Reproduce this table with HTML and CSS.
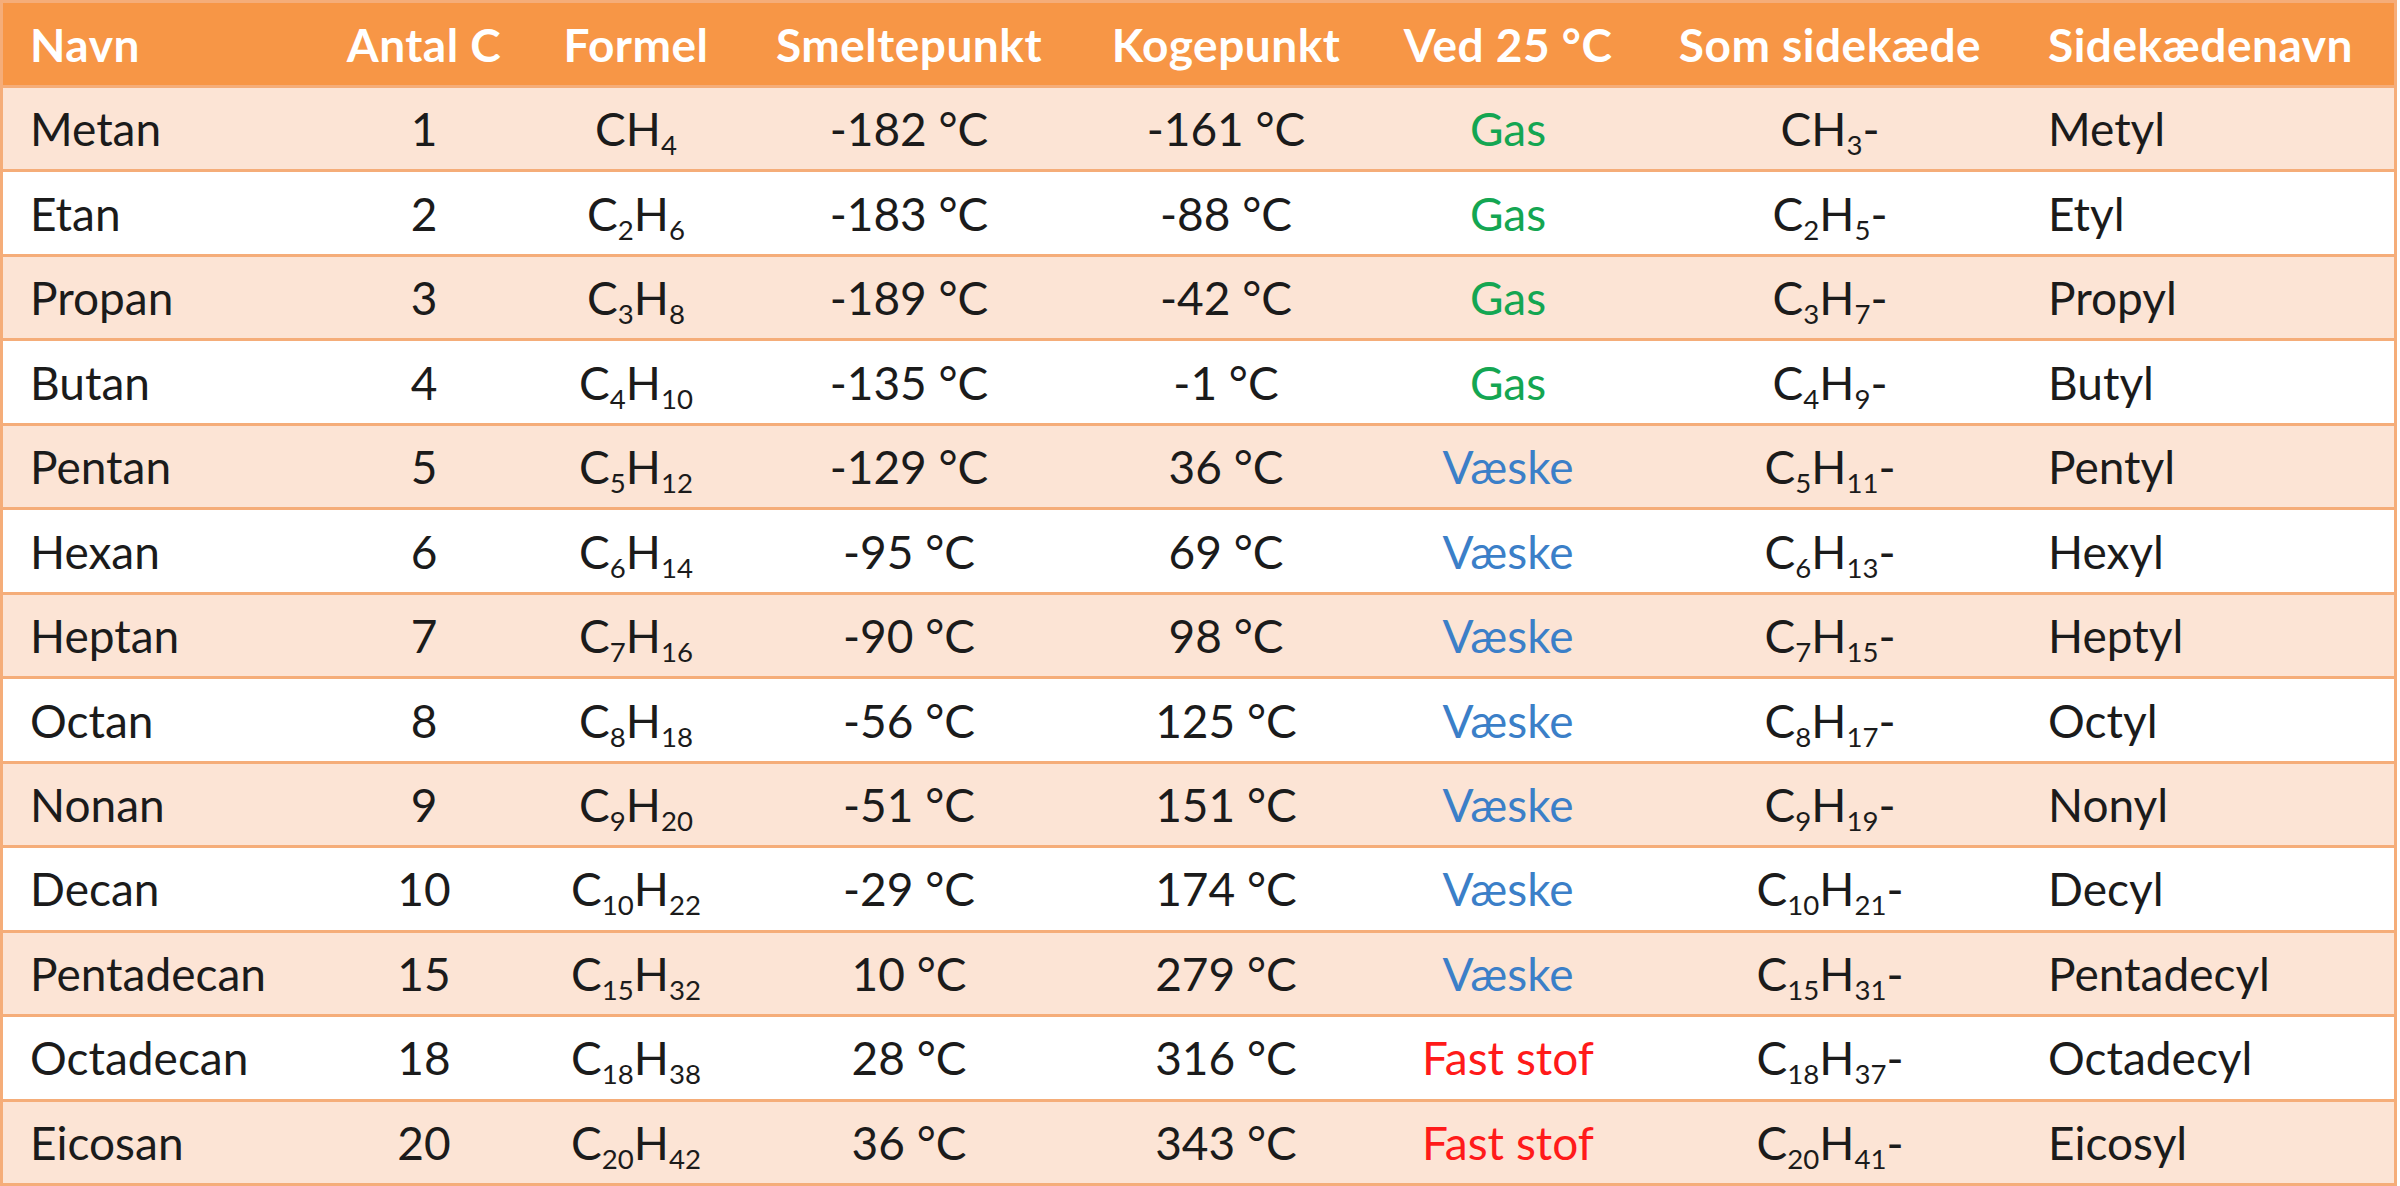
FILE: index.html
```html
<!DOCTYPE html>
<html lang="da">
<head>
<meta charset="utf-8">
<title>Alkaner</title>
<link rel="stylesheet" href="styles.css">
</head>
<body>
<div class="table">
  <div class="row head">
    <div class="c1">Navn</div><div class="c">Antal C</div><div class="c">Formel</div><div class="c">Smeltepunkt</div><div class="c">Kogepunkt</div><div class="c">Ved 25 °C</div><div class="c">Som sidekæde</div><div class="c8">Sidekædenavn</div>
  </div>
  <div class="row odd">
    <div class="c1">Metan</div><div class="c">1</div><div class="c">CH<sub>4</sub></div><div class="c">-182 °C</div><div class="c">-161 °C</div><div class="c gas">Gas</div><div class="c">CH<sub>3</sub>-</div><div class="c8">Metyl</div>
  </div>
  <div class="row even">
    <div class="c1">Etan</div><div class="c">2</div><div class="c">C<sub>2</sub>H<sub>6</sub></div><div class="c">-183 °C</div><div class="c">-88 °C</div><div class="c gas">Gas</div><div class="c">C<sub>2</sub>H<sub>5</sub>-</div><div class="c8">Etyl</div>
  </div>
  <div class="row odd">
    <div class="c1">Propan</div><div class="c">3</div><div class="c">C<sub>3</sub>H<sub>8</sub></div><div class="c">-189 °C</div><div class="c">-42 °C</div><div class="c gas">Gas</div><div class="c">C<sub>3</sub>H<sub>7</sub>-</div><div class="c8">Propyl</div>
  </div>
  <div class="row even">
    <div class="c1">Butan</div><div class="c">4</div><div class="c">C<sub>4</sub>H<sub>10</sub></div><div class="c">-135 °C</div><div class="c">-1 °C</div><div class="c gas">Gas</div><div class="c">C<sub>4</sub>H<sub>9</sub>-</div><div class="c8">Butyl</div>
  </div>
  <div class="row odd">
    <div class="c1">Pentan</div><div class="c">5</div><div class="c">C<sub>5</sub>H<sub>12</sub></div><div class="c">-129 °C</div><div class="c">36 °C</div><div class="c liquid">Væske</div><div class="c">C<sub>5</sub>H<sub>11</sub>-</div><div class="c8">Pentyl</div>
  </div>
  <div class="row even">
    <div class="c1">Hexan</div><div class="c">6</div><div class="c">C<sub>6</sub>H<sub>14</sub></div><div class="c">-95 °C</div><div class="c">69 °C</div><div class="c liquid">Væske</div><div class="c">C<sub>6</sub>H<sub>13</sub>-</div><div class="c8">Hexyl</div>
  </div>
  <div class="row odd">
    <div class="c1">Heptan</div><div class="c">7</div><div class="c">C<sub>7</sub>H<sub>16</sub></div><div class="c">-90 °C</div><div class="c">98 °C</div><div class="c liquid">Væske</div><div class="c">C<sub>7</sub>H<sub>15</sub>-</div><div class="c8">Heptyl</div>
  </div>
  <div class="row even">
    <div class="c1">Octan</div><div class="c">8</div><div class="c">C<sub>8</sub>H<sub>18</sub></div><div class="c">-56 °C</div><div class="c">125 °C</div><div class="c liquid">Væske</div><div class="c">C<sub>8</sub>H<sub>17</sub>-</div><div class="c8">Octyl</div>
  </div>
  <div class="row odd">
    <div class="c1">Nonan</div><div class="c">9</div><div class="c">C<sub>9</sub>H<sub>20</sub></div><div class="c">-51 °C</div><div class="c">151 °C</div><div class="c liquid">Væske</div><div class="c">C<sub>9</sub>H<sub>19</sub>-</div><div class="c8">Nonyl</div>
  </div>
  <div class="row even">
    <div class="c1">Decan</div><div class="c">10</div><div class="c">C<sub>10</sub>H<sub>22</sub></div><div class="c">-29 °C</div><div class="c">174 °C</div><div class="c liquid">Væske</div><div class="c">C<sub>10</sub>H<sub>21</sub>-</div><div class="c8">Decyl</div>
  </div>
  <div class="row odd">
    <div class="c1">Pentadecan</div><div class="c">15</div><div class="c">C<sub>15</sub>H<sub>32</sub></div><div class="c">10 °C</div><div class="c">279 °C</div><div class="c liquid">Væske</div><div class="c">C<sub>15</sub>H<sub>31</sub>-</div><div class="c8">Pentadecyl</div>
  </div>
  <div class="row even">
    <div class="c1">Octadecan</div><div class="c">18</div><div class="c">C<sub>18</sub>H<sub>38</sub></div><div class="c">28 °C</div><div class="c">316 °C</div><div class="c solid">Fast stof</div><div class="c">C<sub>18</sub>H<sub>37</sub>-</div><div class="c8">Octadecyl</div>
  </div>
  <div class="row odd">
    <div class="c1">Eicosan</div><div class="c">20</div><div class="c">C<sub>20</sub>H<sub>42</sub></div><div class="c">36 °C</div><div class="c">343 °C</div><div class="c solid">Fast stof</div><div class="c">C<sub>20</sub>H<sub>41</sub>-</div><div class="c8">Eicosyl</div>
  </div>
</div>
</body>
</html>
```

FILE: styles.css
```css
html, body {
  margin: 0;
  padding: 0;
  background: #ffffff;
}

.table {
  box-sizing: border-box;
  width: 2397px;
  height: 1186px;
  border: 3px solid #f5ad79;
  background: #f5ad79;
  display: flex;
  flex-direction: column;
  gap: 3px;
  font-family: Lato, "Open Sans", sans-serif;
  font-size: 46px;
  color: #1b1b1b;
}

.row {
  flex: 1 1 0;
  display: grid;
  grid-template-columns: 337px 168px 256px 290px 344px 220px 424px 1fr;
  align-items: center;
  min-height: 0;
}

.row.head {
  flex: 0 0 82px;
  background: #f79646;
  color: #ffffff;
  font-weight: 700;
  letter-spacing: 0.5px;
}

.row.odd { background: #fce4d5; }
.row.even { background: #ffffff; }

.c1 {
  padding-left: 27px;
  white-space: nowrap;
}

.c {
  text-align: center;
  white-space: nowrap;
}

.c8 {
  padding-left: 6px;
  white-space: nowrap;
}

sub {
  font-size: 60%;
  vertical-align: -0.33em;
  line-height: 0;
}

.gas { color: #14a652; }
.liquid { color: #3b7fc8; }
.solid { color: #ff1a1a; }
```
